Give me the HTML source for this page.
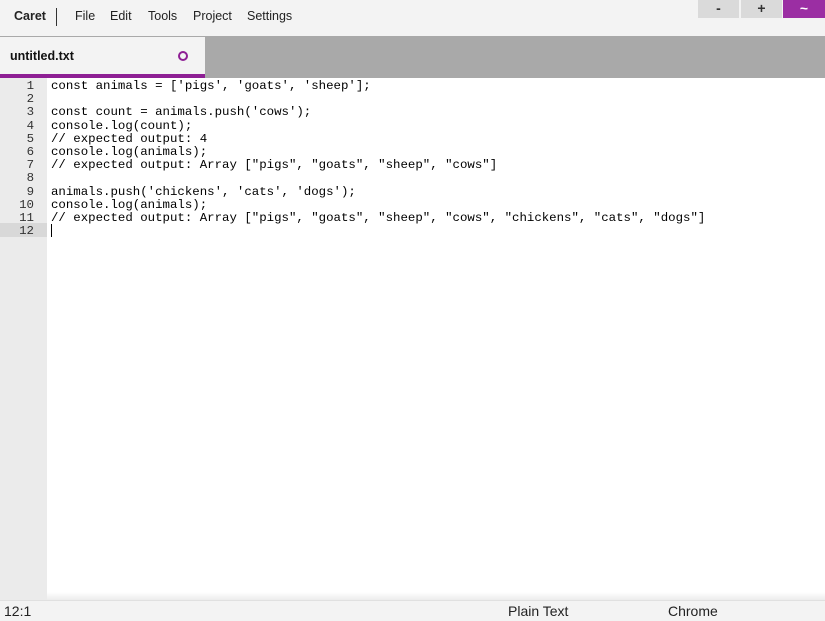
<!DOCTYPE html>
<html><head><meta charset="utf-8"><style>
*{margin:0;padding:0;box-sizing:border-box}
body{width:825px;height:621px;overflow:hidden;background:#fff;font-family:"Liberation Sans",sans-serif;position:relative}
#top{position:absolute;left:0;top:0;width:825px;height:36px;background:#f3f3f3}
.m{position:absolute;top:9px;font-size:12.5px;color:#222}
#sep{position:absolute;left:56px;top:8px;width:1px;height:18px;background:#333}
.b{position:absolute;top:0;height:18px;width:41px;background:#dadada;text-align:center;font-size:14px;line-height:17px;font-weight:bold;color:#333}
#tabs{position:absolute;left:0;top:36px;width:825px;height:42px;background:#a9a9a9}
#tab{position:absolute;left:0;top:1px;width:205px;height:41px;background:#f3f3f3;border-bottom:4px solid #8e1f94}
#tab span{position:absolute;left:10px;top:12px;font-size:12.5px;font-weight:bold;color:#111}
#dot{position:absolute;left:178px;top:14px;width:10px;height:10px;border:2px solid #8e1f94;border-radius:50%}
#gut{position:absolute;left:0;top:78px;width:47px;height:522px;background:#ebebeb}
#hl{position:absolute;left:0;top:223px;width:47px;height:14px;background:#d8d8d8}
pre{position:absolute;top:80px;font-family:"Liberation Mono",monospace;font-size:12.4px;line-height:13.2px;color:#000}
#nums{left:0;width:34px;text-align:right;color:#333}
#code{left:51px}
#cur{position:absolute;left:51px;top:224px;width:1px;height:13px;background:#000}
#status{position:absolute;left:0;top:600px;width:825px;height:21px;background:#f3f3f3;border-top:1px solid #e0e0e0;font-size:14px;color:#222}
#status span{position:absolute;top:2px}
#shade{position:absolute;left:47px;top:592px;width:778px;height:8px;background:linear-gradient(#fff,#ececec)}
</style></head><body>
<div id="top">
<span class="m" style="left:14px;font-weight:bold">Caret</span>
<div id="sep"></div>
<span class="m" style="left:75px">File</span>
<span class="m" style="left:110px">Edit</span>
<span class="m" style="left:148px">Tools</span>
<span class="m" style="left:193px">Project</span>
<span class="m" style="left:247px">Settings</span>
<div class="b" style="left:698px">-</div>
<div class="b" style="left:741px">+</div>
<div class="b" style="left:783px;width:42px;background:#9b2ea3;color:#fff">~</div>
</div>
<div id="tabs"><div id="tab"><span>untitled.txt</span><div id="dot"></div></div></div>
<div id="gut"></div><div id="hl"></div>
<div id="shade"></div>
<pre id="nums">1
2
3
4
5
6
7
8
9
10
11
12</pre>
<pre id="code">const animals = ['pigs', 'goats', 'sheep'];

const count = animals.push('cows');
console.log(count);
// expected output: 4
console.log(animals);
// expected output: Array ["pigs", "goats", "sheep", "cows"]

animals.push('chickens', 'cats', 'dogs');
console.log(animals);
// expected output: Array ["pigs", "goats", "sheep", "cows", "chickens", "cats", "dogs"]
</pre>
<div id="cur"></div>
<div id="status"><span style="left:4px">12:1</span><span style="left:508px">Plain Text</span><span style="left:668px">Chrome</span></div>
</body></html>
